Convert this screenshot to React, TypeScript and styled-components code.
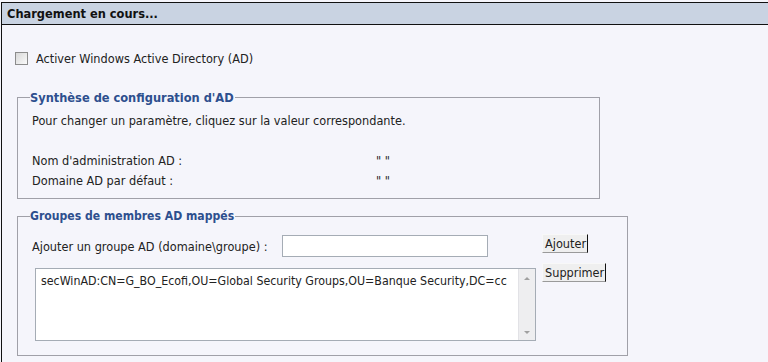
import React from 'react';
import styled, { createGlobalStyle } from 'styled-components';

const GlobalStyle = createGlobalStyle`
  html, body {
    margin: 0;
    padding: 0;
    background: #f5f5fb;
    font-family: "DejaVu Sans Condensed", "DejaVu Sans", sans-serif;
    font-size: 12.6px;
    color: #222;
  }
`;

const Frame = styled.div`
  margin-left: 1px;
  border-left: 1px solid #111;
  min-height: 362px;
  box-sizing: border-box;
  background: #f5f5fb;
`;

const Header = styled.div`
  height: 21px;
  margin-top: 2px;
  border-top: 1px solid #111;
  border-bottom: 1px solid #111;
  background: #c9d3e2;
  display: flex;
  align-items: center;
  padding-left: 5px;
  font-weight: bold;
  font-size: 12.7px;
  color: #111;
`;

const Body = styled.div`
  padding: 26px 0 0 13px;
`;

const CheckRow = styled.label`
  display: flex;
  align-items: center;
  gap: 8px;
  height: 14px;
`;

const Check = styled.span`
  width: 11px;
  height: 11px;
  border: 1px solid #8c8c8c;
  background: linear-gradient(135deg, #d8d8d8, #fafafa);
`;

const Fieldset = styled.fieldset<{ $w: number; $h: number; $top: number }>`
  box-sizing: border-box;
  width: ${(p) => p.$w}px;
  height: ${(p) => p.$h}px;
  margin: ${(p) => p.$top}px 0 0 2px;
  padding: 0 0 0 14px;
  border: 1px solid #a0a0a8;
`;

const Legend = styled.legend<{ $size: number }>`
  padding: 0 1px 0 0;
  margin-left: -2px;
  color: #2d4f8e;
  font-weight: bold;
  font-size: ${(p) => p.$size}px;
  line-height: 15px;
`;

const Intro = styled.div`
  margin-top: 9px;
  line-height: 14px;
`;

const Props = styled.div`
  margin-top: 26px;
  display: flex;
  flex-direction: column;
  gap: 6px;
`;

const PropRow = styled.div`
  display: flex;
  line-height: 14px;
`;

const PropLabel = styled.span`
  width: 344px;
`;

const Quote = styled.span`
  color: #222;
`;

const GroupGrid = styled.div`
  display: grid;
  grid-template-columns: 482px auto;
  column-gap: 28px;
  margin-top: 10px;
`;

const AddRow = styled.div`
  display: flex;
  align-items: center;
  gap: 14px;
  height: 22px;
  margin-top: 1px;
`;

const TextInput = styled.div`
  box-sizing: border-box;
  width: 206px;
  height: 22px;
  border: 1px solid #a5acb5;
  background: #fff;
`;

const ListBox = styled.div`
  box-sizing: border-box;
  margin: 11px 0 0 3px;
  width: 501px;
  height: 73px;
  border: 1px solid #a5acb5;
  background: #fff;
  display: flex;
`;

const ListText = styled.div`
  flex: 1;
  padding: 5px 0 0 5px;
  font-size: 12.3px;
  line-height: 14px;
  white-space: nowrap;
  overflow: hidden;
`;

const ScrollBar = styled.div`
  width: 16px;
  background: #eeeef0;
  border-left: 1px solid #e2e2e6;
  display: flex;
  flex-direction: column;
  justify-content: space-between;
  align-items: center;
  padding: 8px 0 6px;
`;

const Arrow = styled.span<{ $down?: boolean }>`
  width: 0;
  height: 0;
  border-left: 3px solid transparent;
  border-right: 3px solid transparent;
  ${(p) => (p.$down ? 'border-top: 3px solid #a0a0a0;' : 'border-bottom: 3px solid #a0a0a0;')}
`;

const Buttons = styled.div`
  display: flex;
  flex-direction: column;
  align-items: flex-start;
  gap: 10px;
`;

const Button = styled.button`
  font-family: inherit;
  font-size: 12.6px;
  color: #222;
  background: #efefef;
  border: 1px solid;
  border-color: #f8f8f8 #111 #9a9a9a #f8f8f8;
  padding: 1px 1px 1px 2px;
  line-height: 15px;
  cursor: pointer;
`;

export default function App() {
  return (
    <>
      <GlobalStyle />
      <Frame>
        <Header>Chargement en cours...</Header>
        <Body>
          <CheckRow>
            <Check />
            Activer Windows Active Directory (AD)
          </CheckRow>

          <Fieldset $w={583} $h={109} $top={25}>
            <Legend $size={12.7}>Synthèse de configuration d'AD</Legend>
            <Intro>Pour changer un paramètre, cliquez sur la valeur correspondante.</Intro>
            <Props>
              <PropRow>
                <PropLabel>Nom d'administration AD :</PropLabel>
                <Quote>" "</Quote>
              </PropRow>
              <PropRow>
                <PropLabel>Domaine AD par défaut :</PropLabel>
                <Quote>" "</Quote>
              </PropRow>
            </Props>
          </Fieldset>

          <Fieldset $w={611} $h={147} $top={10}>
            <Legend $size={12.1}>Groupes de membres AD mappés</Legend>
            <GroupGrid>
              <div>
                <AddRow>
                  Ajouter un groupe AD (domaine\groupe) :
                  <TextInput />
                </AddRow>
                <ListBox>
                  <ListText>
                    secWinAD:CN=G_BO_Ecofi,OU=Global Security Groups,OU=Banque Security,DC=cc
                  </ListText>
                  <ScrollBar>
                    <Arrow />
                    <Arrow $down />
                  </ScrollBar>
                </ListBox>
              </div>
              <Buttons>
                <Button>Ajouter</Button>
                <Button>Supprimer</Button>
              </Buttons>
            </GroupGrid>
          </Fieldset>
        </Body>
      </Frame>
    </>
  );
}
